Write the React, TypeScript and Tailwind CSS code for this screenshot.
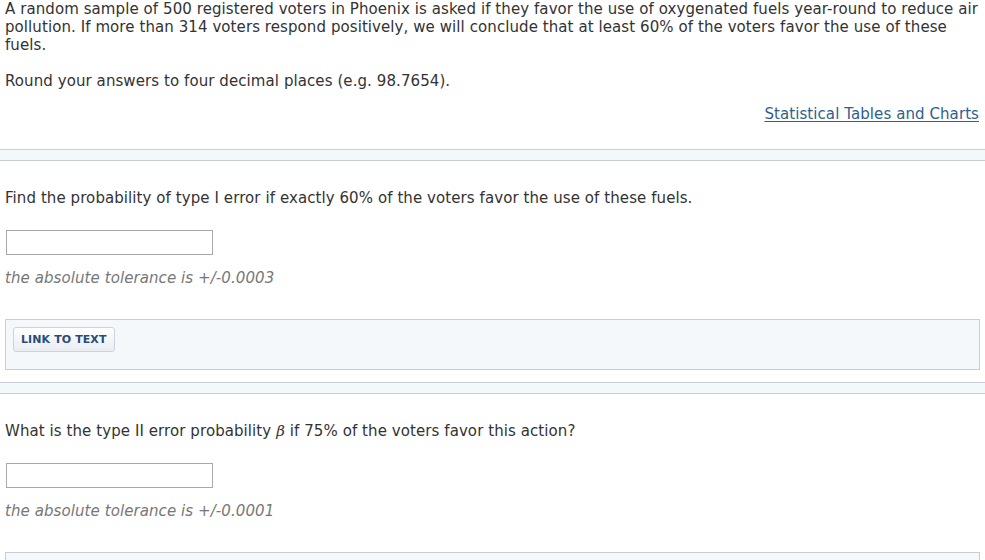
import React from "react";

function Separator() {
  return <div className="h-[12px] w-full border-y border-[#c9cdd6] bg-[#f3f8fb]" />;
}

function Question({ text, tol }: { text: React.ReactNode; tol: string }) {
  return (
    <div className="px-[5px]">
      <p className="mt-[28px]">{text}</p>
      <div className="mt-[23px] ml-[1px] h-[25px] w-[207px] border border-[#a9a9a9] bg-white" />
      <p className="mt-[14px] italic text-[#777]">{tol}</p>
    </div>
  );
}

export default function App() {
  return (
    <div className="min-h-[560px] bg-white text-[15px] leading-[18px] tracking-[0.08px] text-[#333]" style={{ fontFamily: '"DejaVu Sans", Verdana, sans-serif' }}>
      <div className="px-[5px]">
        <p>
          A random sample of 500 registered voters in Phoenix is asked if they favor the use of oxygenated fuels year-round to reduce air pollution. If more than 314 voters respond positively, we will conclude that at least 60% of the voters favor the use of these fuels.
        </p>
        <p className="mt-[18px]">Round your answers to four decimal places (e.g. 98.7654).</p>
        <div className="mt-[15px] flex justify-end pr-[1px]">
          <a className="text-[#2e5f8e] underline underline-offset-2" href="#">Statistical Tables and Charts</a>
        </div>
      </div>
      <div className="mt-[26px]">
        <Separator />
      </div>
      <Question text="Find the probability of type I error if exactly 60% of the voters favor the use of these fuels." tol="the absolute tolerance is +/-0.0003" />
      <div className="mx-[5px] mt-[32px] h-[51px] border border-[#c9cdd6] bg-[#f4f8fb] pl-[7px] pt-[7px]">
        <button className="h-[25px] rounded-[3px] border border-[#cdd3db] bg-gradient-to-b from-white to-[#e9edf2] px-[7px] text-[11px] font-bold tracking-[0.1px] text-[#2b4b78]" style={{ fontFamily: '"DejaVu Sans", Verdana, sans-serif' }}>
          LINK TO TEXT
        </button>
      </div>
      <div className="mt-[12px]">
        <Separator />
      </div>
      <Question
        text={<>What is the type II error probability <i style={{ fontFamily: '"DejaVu Serif", serif' }}>β</i> if 75% of the voters favor this action?</>}
        tol="the absolute tolerance is +/-0.0001"
      />
      <div className="mx-[5px] mt-[32px] h-[30px] border border-[#c9cdd6] bg-[#f4f8fb]" />
    </div>
  );
}
